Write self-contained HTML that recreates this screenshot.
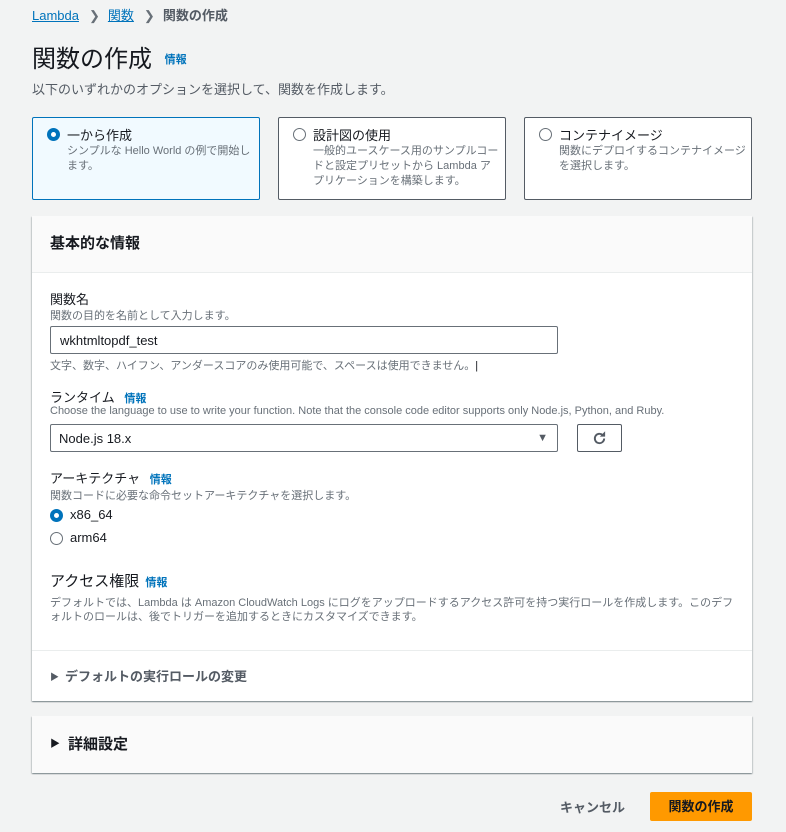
<!DOCTYPE html>
<html><head><meta charset="utf-8"><style>
*{margin:0;padding:0;box-sizing:border-box}
body{width:786px;height:832px;background:#f2f3f3;font-family:"Liberation Sans","Noto Sans CJK JP",sans-serif;color:#16191f;position:relative;overflow:hidden}
.a{position:absolute;white-space:nowrap}
.link{color:#0073bb}
.info{color:#0073bb;font-size:11px;font-weight:bold}
.card{position:absolute;top:117px;width:228px;height:83px;border:1px solid #545b64;border-radius:2px;background:#fff}
.card.sel{background:#f1faff;border-color:#0073bb}
.card .t{position:absolute;left:34px;top:7px;font-size:13px}
.card .d{position:absolute;left:34px;top:26px;font-size:11px;color:#687078;line-height:15px;white-space:normal;width:188px}
.rad{position:absolute;width:13px;height:13px;border-radius:50%;border:1.5px solid #687078;background:#fff}
.rad.on{border:4px solid #0073bb}
.panel{position:absolute;left:32px;width:720px;background:#fff;box-shadow:0 1px 1px 0 rgba(0,28,36,.3),1px 1px 1px 0 rgba(0,28,36,.15),-1px 1px 1px 0 rgba(0,28,36,.15)}
.lbl{font-size:13px}
.sd{font-size:11px;color:#687078}
.box{position:absolute;border:1px solid #aab7b8;border-radius:2px;background:#fff;height:28px}
</style></head><body>
<div class="a" style="left:32px;top:5px;font-size:13px"><span class="link" style="text-decoration:underline">Lambda</span><span style="color:#687078;margin:0 8px 0 10px">❯</span><span class="link" style="text-decoration:underline">関数</span><span style="color:#687078;margin:0 8px 0 10px">❯</span><span style="color:#545b64;font-weight:bold">関数の作成</span></div>
<div class="a" style="left:32px;top:39px;font-size:24px">関数の作成 <span class="info" style="margin-left:6px;vertical-align:4px">情報</span></div>
<div class="a" style="left:32px;top:79px;font-size:13px;color:#545b64">以下のいずれかのオプションを選択して、関数を作成します。</div>

<div class="card sel" style="left:32px"><div class="rad on" style="left:14px;top:10px"></div><div class="t">一から作成</div><div class="d">シンプルな Hello World の例で開始します。</div></div>
<div class="card" style="left:278px"><div class="rad" style="left:14px;top:10px"></div><div class="t">設計図の使用</div><div class="d">一般的ユースケース用のサンプルコードと設定プリセットから Lambda アプリケーションを構築します。</div></div>
<div class="card" style="left:524px"><div class="rad" style="left:14px;top:10px"></div><div class="t">コンテナイメージ</div><div class="d">関数にデプロイするコンテナイメージを選択します。</div></div>

<div class="panel" style="top:216px;height:485px">
 <div style="height:57px;background:#fafafa;border-bottom:1px solid #eaeded"></div>
 <div class="a" style="left:18px;top:16px;font-size:15px;font-weight:bold">基本的な情報</div>
 <div class="a lbl" style="left:18px;top:73px">関数名</div>
 <div class="a sd" style="left:18px;top:91px">関数の目的を名前として入力します。</div>
 <div class="box" style="left:18px;top:110px;width:508px;border-color:#687078"><span class="a" style="left:9px;top:6px;font-size:13px">wkhtmltopdf_test</span></div>
 <div class="a sd" style="left:18px;top:141px">文字、数字、ハイフン、アンダースコアのみ使用可能で、スペースは使用できません。<span style="color:#16191f">|</span></div>
 <div class="a lbl" style="left:18px;top:171px">ランタイム <span class="info" style="margin-left:6px">情報</span></div>
 <div class="a sd" style="left:18px;top:189px">Choose the language to use to write your function. Note that the console code editor supports only Node.js, Python, and Ruby.</div>
 <div class="box" style="left:18px;top:208px;width:508px;border-color:#687078"><span class="a" style="left:8px;top:6px;font-size:13px">Node.js 18.x</span><span class="a" style="right:9px;top:7px;font-size:11px;color:#545b64">▼</span></div>
 <div class="box" style="left:545px;top:208px;width:45px;border-color:#545b64"><svg class="a" style="left:14px;top:6px" width="15" height="15" viewBox="0 0 16 16"><path d="M13 8a5 5 0 1 1-1.6-3.7" fill="none" stroke="#545b64" stroke-width="2"/><path d="M13.5 1.5v4h-4z" fill="#545b64" stroke="#545b64"/></svg></div>
 <div class="a lbl" style="left:18px;top:252px">アーキテクチャ <span class="info" style="margin-left:6px">情報</span></div>
 <div class="a sd" style="left:18px;top:271px">関数コードに必要な命令セットアーキテクチャを選択します。</div>
 <div class="rad on" style="left:18px;top:293px"></div><div class="a lbl" style="left:38px;top:291px">x86_64</div>
 <div class="rad" style="left:18px;top:316px"></div><div class="a lbl" style="left:38px;top:314px">arm64</div>
 <div class="a" style="left:18px;top:354px;font-size:15px">アクセス権限 <span class="info" style="margin-left:2px">情報</span></div>
 <div class="a sd" style="left:18px;top:380px;line-height:14px;white-space:normal;width:690px">デフォルトでは、Lambda は Amazon CloudWatch Logs にログをアップロードするアクセス許可を持つ実行ロールを作成します。このデフォルトのロールは、後でトリガーを追加するときにカスタマイズできます。</div>
 <div style="position:absolute;left:0;top:434px;width:720px;border-top:1px solid #eaeded"></div>
 <div class="a" style="left:18px;top:450px;font-size:13px;color:#545b64;font-weight:bold"><span style="font-size:9px;margin-right:6px;vertical-align:1px">▶</span>デフォルトの実行ロールの変更</div>
</div>

<div class="panel" style="top:716px;height:57px;background:#fafafa">
 <div class="a" style="left:18px;top:17px;font-size:15px;font-weight:bold"><span style="font-size:10px;margin-right:8px;vertical-align:2px">▶</span>詳細設定</div>
</div>

<div class="a" style="left:560px;top:797px;font-size:13px;color:#545b64;font-weight:bold">キャンセル</div>
<div style="position:absolute;left:650px;top:792px;width:102px;height:29px;background:#ff9900;border-radius:2px;font-size:13px;font-weight:bold;text-align:center;line-height:29px">関数の作成</div>
</body></html>
